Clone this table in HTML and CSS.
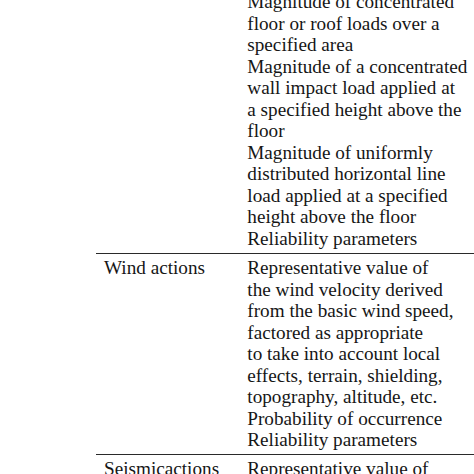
FILE: index.html
```html
<!DOCTYPE html>
<html>
<head>
<meta charset="utf-8">
<link rel="stylesheet" href="styles.css">
</head>
<body>
<div class="table">
  <div class="row first">
    <div class="cell label"></div>
    <div class="cell desc">
      <div class="item">Magnitude of concentrated<br>floor or roof loads over a<br>specified area</div>
      <div class="item">Magnitude of a concentrated<br>wall impact load applied at<br>a specified height above the<br>floor</div>
      <div class="item">Magnitude of uniformly<br>distributed horizontal line<br>load applied at a specified<br>height above the floor</div>
      <div class="item">Reliability parameters</div>
    </div>
  </div>
  <div class="row">
    <div class="cell label">Wind actions</div>
    <div class="cell desc">
      <div class="item">Representative value of<br>the wind velocity derived<br>from the basic wind speed,<br>factored as appropriate<br>to take into account local<br>effects, terrain, shielding,<br>topography, altitude, etc.</div>
      <div class="item">Probability of occurrence</div>
      <div class="item">Reliability parameters</div>
    </div>
  </div>
  <div class="row">
    <div class="cell label">Seismicactions</div>
    <div class="cell desc">
      <div class="item">Representative value of</div>
    </div>
  </div>
</div>
</body>
</html>
```
FILE: styles.css
```css
html, body {
  margin: 0;
  padding: 0;
  background: #ffffff;
}
body {
  width: 474px;
  height: 474px;
  overflow: hidden;
}
.table {
  margin-top: -8.7px;
  margin-left: 96px;
  width: 378px;
  font-family: "Liberation Serif", "Times New Roman", serif;
  font-size: 19.2px;
  line-height: 21.5px;
  color: #161616;
}
.row {
  display: grid;
  grid-template-columns: 151.3px 1fr;
  border-top: 1.5px solid #2a2a2a;
  padding-top: 3px;
  padding-bottom: 3.8px;
}
.row.first {
  border-top: none;
  padding-top: 0;
}
.cell {
  white-space: nowrap;
}
.label {
  padding-left: 8px;
}
```
